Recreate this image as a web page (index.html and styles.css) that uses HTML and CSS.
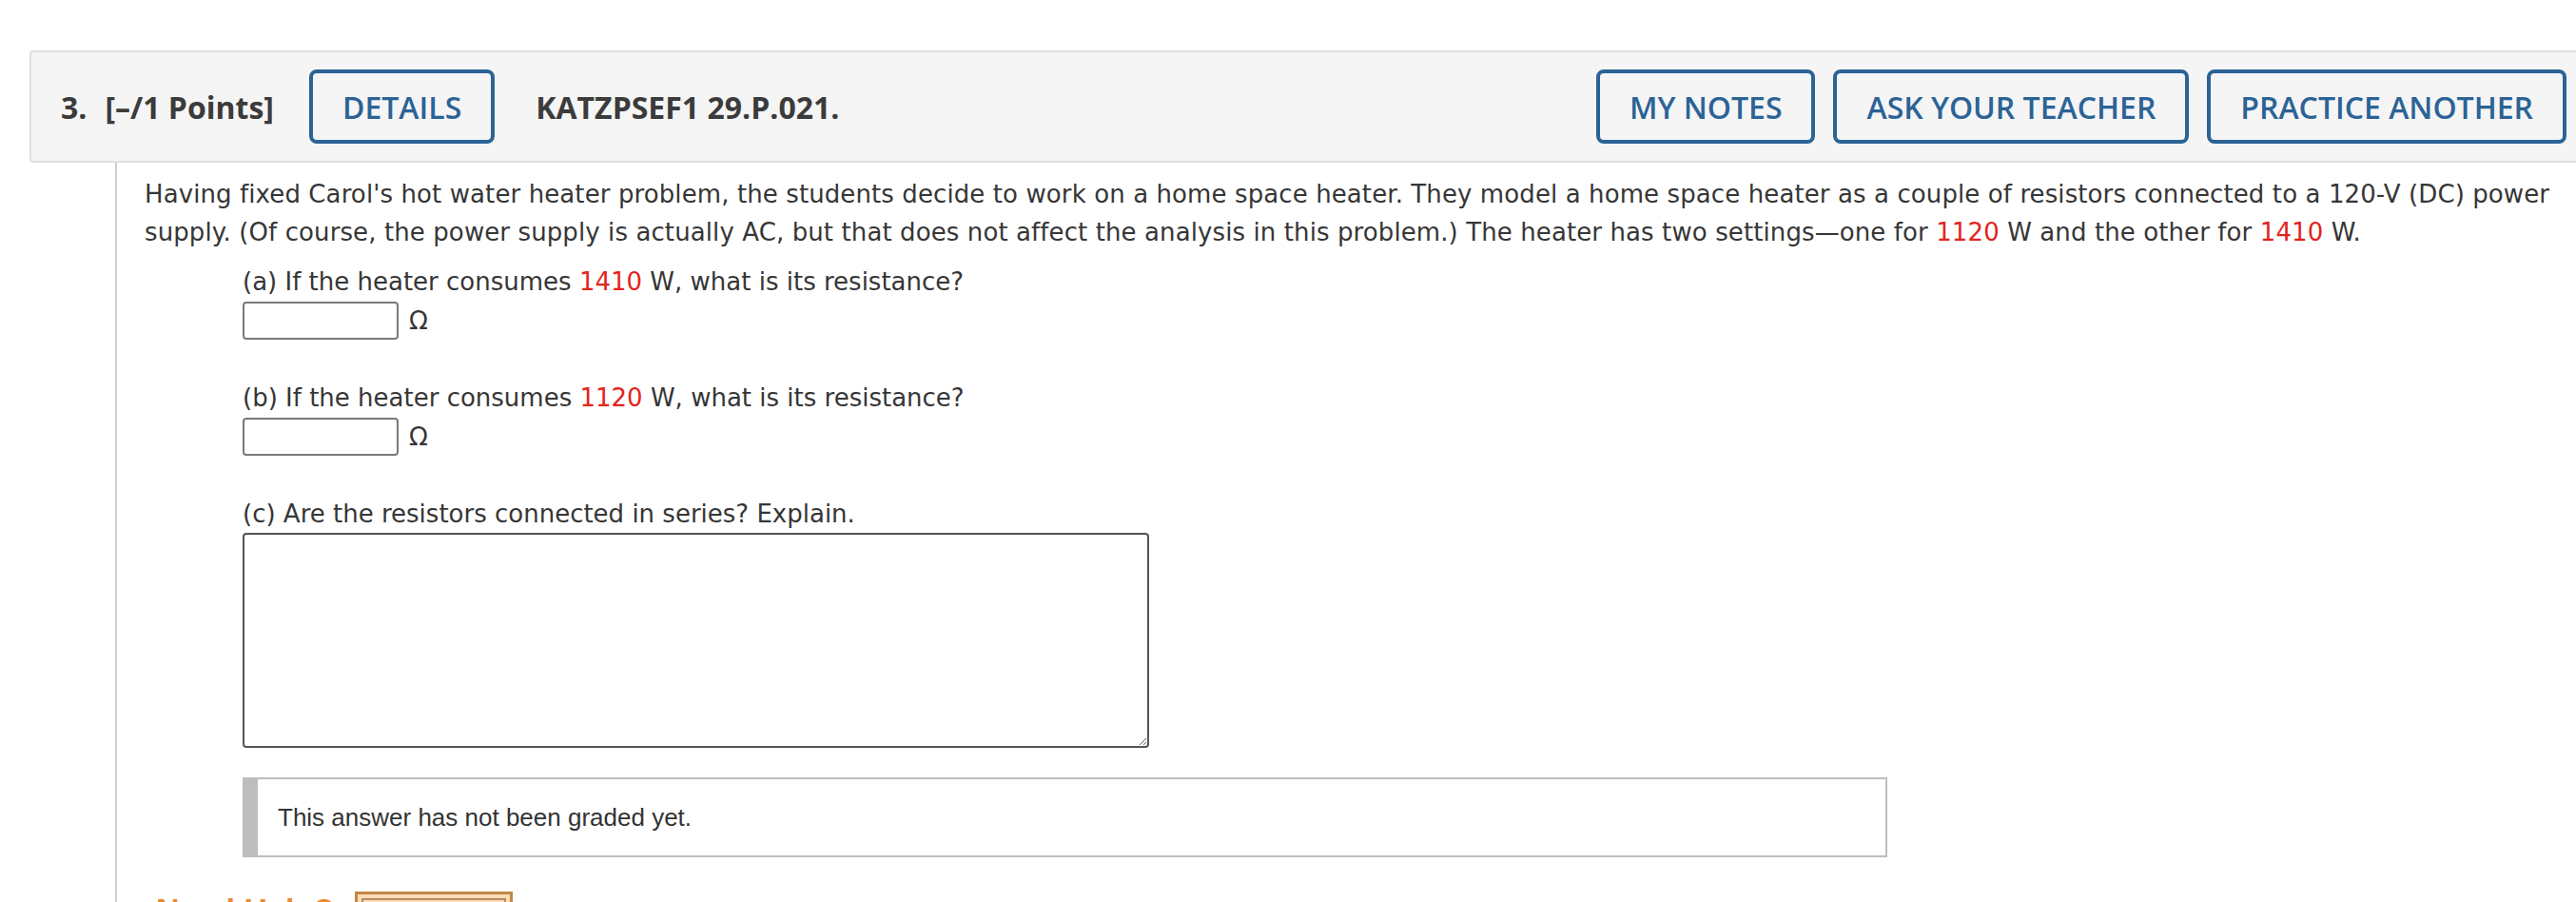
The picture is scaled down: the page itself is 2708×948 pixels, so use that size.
FILE: index.html
```html
<!DOCTYPE html>
<html lang="en">
<head>
    <meta charset="UTF-8">
    <title>Question 3</title>
    <link rel="stylesheet" href="styles.css">
</head>
<body>
    <div class="question">
        <div class="q-header">
            <span class="q-num">3.</span>
            <span class="q-points">[&ndash;/1 Points]</span>
            <button class="q-btn">DETAILS</button>
            <span class="q-code">KATZPSEF1 29.P.021.</span>
            <div class="q-actions">
                <button class="q-btn">MY NOTES</button>
                <button class="q-btn">ASK YOUR TEACHER</button>
                <button class="q-btn">PRACTICE ANOTHER</button>
            </div>
        </div>

        <div class="q-body">
            <p class="q-text">Having fixed Carol's hot water heater problem, the students decide to work on a home space heater. They model a home space heater as a couple of resistors connected to a 120-V (DC) power supply. (Of course, the power supply is actually AC, but that does not affect the analysis in this problem.) The heater has two settings&mdash;one for <span class="num">1120</span> W and the other for <span class="num">1410</span> W.</p>

            <div class="parts">
                <div class="part">
                    <div class="part-label">(a) If the heater consumes <span class="num">1410</span> W, what is its resistance?</div>
                    <div class="answer-row">
                        <input class="answer" type="text">
                        <span class="unit">&Omega;</span>
                    </div>
                </div>

                <div class="part">
                    <div class="part-label">(b) If the heater consumes <span class="num">1120</span> W, what is its resistance?</div>
                    <div class="answer-row">
                        <input class="answer" type="text">
                        <span class="unit">&Omega;</span>
                    </div>
                </div>

                <div class="part">
                    <div class="part-label">(c) Are the resistors connected in series? Explain.</div>
                    <textarea class="essay"></textarea>
                </div>

                <div class="graded">This answer has not been graded yet.</div>
            </div>

            <div class="help">
                <span class="help-label">Need Help?</span>
                <button class="help-btn">Read It</button>
            </div>
        </div>
    </div>
</body>
</html>
```

FILE: styles.css
```css
html, body {
    overflow: hidden;
}
body {
    margin: 0;
    background-color: #fff;
    font-family: 'DejaVu Sans', Verdana, sans-serif;
    font-size: 26px;
    color: #363636;
}
.question {
    margin: 53px 0 0 31px;
}
.q-header {
    display: flex;
    align-items: center;
    height: 118px;
    box-sizing: border-box;
    padding: 0 10px 0 31px;
    background-color: #f5f5f5;
    border: 2px solid #dedede;
    border-right: none;
    border-radius: 4px 0 0 4px;
    font-family: 'Open Sans', sans-serif;
    font-size: 32px;
}
.q-num,
.q-points,
.q-code {
    font-weight: 700;
    color: #3b3b3b;
}
.q-points {
    margin-left: 19px;
    margin-right: 37px;
}
.q-code {
    margin-left: 43px;
}
.q-actions {
    display: flex;
    gap: 19px;
    margin-left: auto;
}
.q-btn {
    height: 78px;
    padding: 0 31px;
    background-color: #f5f5f5;
    border: 4px solid #2b6396;
    border-radius: 8px;
    font-family: 'Open Sans', sans-serif;
    font-size: 32px;
    font-weight: 600;
    color: #2b6396;
    cursor: pointer;
}
.q-body {
    margin-left: 90px;
    border-left: 2px solid #cfcfcf;
    padding: 13px 0 40px 29px;
}
.q-text {
    margin: 0;
    line-height: 40px;
    letter-spacing: 0.1px;
}
.num {
    color: #e3231b;
}
.parts {
    padding-left: 103px;
}
.part {
    margin-top: 12px;
}
.part + .part {
    margin-top: 41px;
}
.part-label {
    line-height: 40px;
}
.answer-row {
    display: flex;
    align-items: center;
    gap: 11px;
    margin-top: 1px;
}
.answer {
    width: 164px;
    height: 40px;
    box-sizing: border-box;
    border: 2px solid #7a7a7a;
    border-radius: 4px;
    font-size: 26px;
}
.unit {
    font-size: 26px;
}
.essay {
    display: block;
    width: 953px;
    height: 226px;
    box-sizing: border-box;
    border: 2px solid #555;
    border-radius: 4px;
    font-size: 26px;
}
.graded {
    margin-top: 31px;
    width: 1729px;
    height: 84px;
    box-sizing: border-box;
    display: flex;
    align-items: center;
    padding-left: 21px;
    border: 2px solid #bdbdbd;
    border-left: 16px solid #bdbdbd;
    font-family: 'Liberation Sans', Arial, sans-serif;
    font-size: 26px;
    color: #333;
}
.help {
    display: flex;
    align-items: flex-start;
    gap: 22px;
    margin-top: 36px;
    padding-left: 12px;
}
.help-label {
    font-family: 'Liberation Sans', Arial, sans-serif;
    font-size: 34px;
    font-weight: 700;
    color: #ec8a2e;
}
.help-btn {
    width: 166px;
    height: 48px;
    background: linear-gradient(#fbe3c6, #f2c28c);
    border: 3px solid #c48744;
    box-shadow: inset 0 0 0 4px #f8dcb8, inset 0 0 0 6px #b98a5a;
    font-family: 'Liberation Sans', Arial, sans-serif;
    font-size: 24px;
    color: #5a3a10;
}
```
